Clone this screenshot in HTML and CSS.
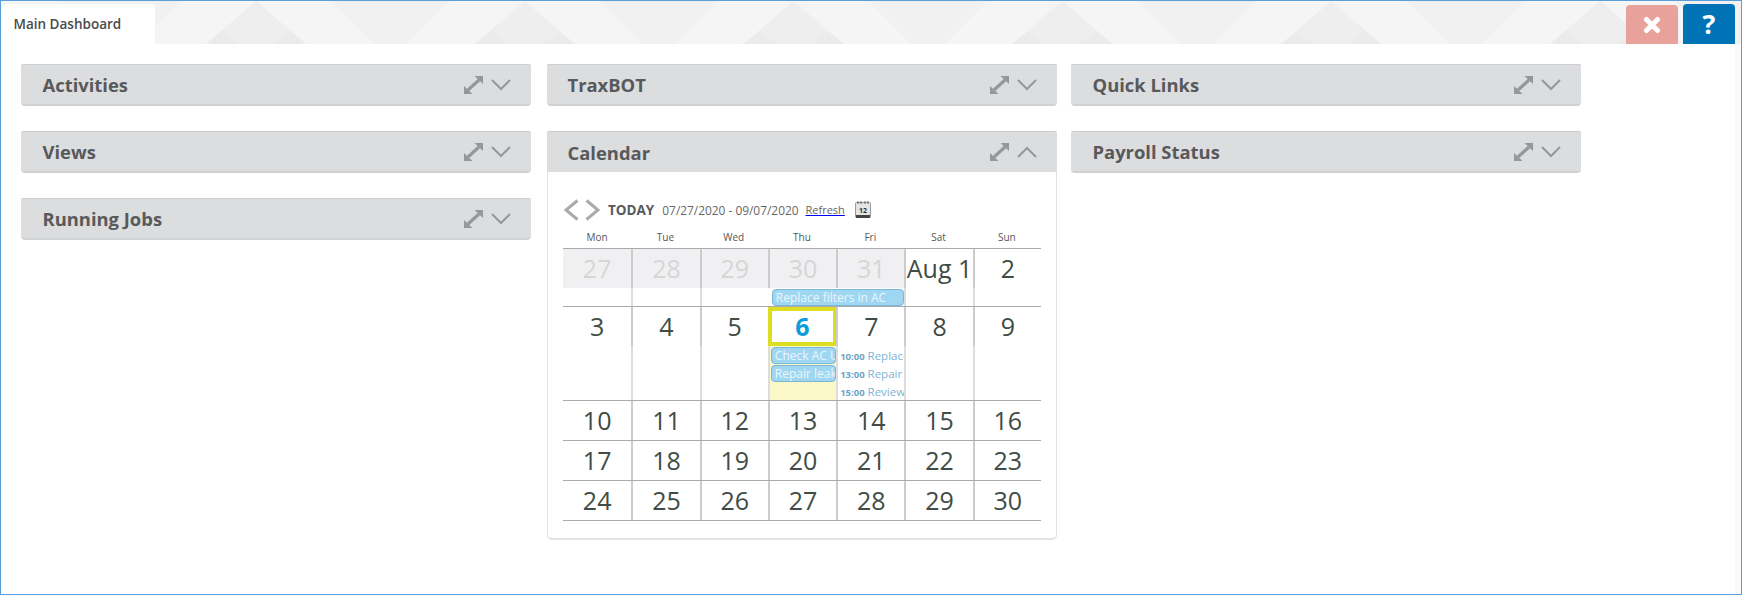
FILE: index.html
```html
<!DOCTYPE html>
<html lang="en">
<head>
    <meta charset="UTF-8">
    <meta name="viewport" content="width=device-width, initial-scale=1.0">
    <title>Main Dashboard</title>
    <link rel="stylesheet" href="styles.css">
</head>
<body>
    <svg width="0" height="0" class="defs">
        <symbol id="ico-expand" viewBox="0 0 19 18">
            <polygon points="10.5,0 19,0 19,8" />
            <polygon points="0,10 0,18 8.5,18" />
            <line x1="4" y1="14" x2="15" y2="4" stroke-width="3.2" />
        </symbol>
    </svg>

    <div class="app">
        <div class="tabbar">
            <svg class="tabbar-bg" width="100%" height="43">
                <defs>
                    <pattern id="tri" width="268.8" height="43" patternUnits="userSpaceOnUse" patternTransform="translate(121 0)">
                        <polygon points="59,0 209,0 252,43 16,43" fill="#f5f5f5" />
                        <polygon points="134,0 184,43 84,43" fill="#eeeeee" />
                        <polygon points="100,30 84,43 116,43" fill="#ebebeb" />
                        <polygon points="168,30 152,43 184,43" fill="#ebebeb" />
                    </pattern>
                </defs>
                <rect width="100%" height="43" fill="#f1f1f1" />
                <rect width="100%" height="43" fill="url(#tri)" />
            </svg>
            <div class="tab">Main Dashboard</div>
            <div class="tab-buttons">
                <button class="btn-close">
                    <svg width="18" height="18" viewBox="0 0 18 18"><path d="M3.5 3.5 14.5 14.5M14.5 3.5 3.5 14.5" /></svg>
                </button>
                <button class="btn-help">?</button>
            </div>
        </div>

        <div class="columns">
            <div class="column">
                <div class="panel">
                    <div class="panel-head">
                        <span class="panel-title">Activities</span>
                        <svg class="ico-expand"><use href="#ico-expand" /></svg>
                        <svg class="ico-chevron" viewBox="0 0 20 12"><path d="M1 1 10 10 19 1" /></svg>
                    </div>
                </div>
                <div class="panel">
                    <div class="panel-head">
                        <span class="panel-title">Views</span>
                        <svg class="ico-expand"><use href="#ico-expand" /></svg>
                        <svg class="ico-chevron" viewBox="0 0 20 12"><path d="M1 1 10 10 19 1" /></svg>
                    </div>
                </div>
                <div class="panel">
                    <div class="panel-head">
                        <span class="panel-title">Running Jobs</span>
                        <svg class="ico-expand"><use href="#ico-expand" /></svg>
                        <svg class="ico-chevron" viewBox="0 0 20 12"><path d="M1 1 10 10 19 1" /></svg>
                    </div>
                </div>
            </div>

            <div class="column column-mid">
                <div class="panel">
                    <div class="panel-head">
                        <span class="panel-title">TraxBOT</span>
                        <svg class="ico-expand"><use href="#ico-expand" /></svg>
                        <svg class="ico-chevron" viewBox="0 0 20 12"><path d="M1 1 10 10 19 1" /></svg>
                    </div>
                </div>
                <div class="panel panel-open">
                    <div class="panel-head">
                        <span class="panel-title">Calendar</span>
                        <svg class="ico-expand"><use href="#ico-expand" /></svg>
                        <svg class="ico-chevron" viewBox="0 0 20 12"><path d="M1 11 10 2 19 11" /></svg>
                    </div>
                    <div class="panel-body">
                        <div class="cal-nav">
                            <svg class="cal-arrow" viewBox="0 0 15 22"><path d="M13.5 1.5 2 11 13.5 20.5" /></svg>
                            <svg class="cal-arrow" viewBox="0 0 15 22"><path d="M1.5 1.5 13 11 1.5 20.5" /></svg>
                            <span class="cal-today">TODAY</span>
                            <span class="cal-range">07/27/2020 - 09/07/2020</span>
                            <a class="cal-refresh" href="#">Refresh</a>
                            <svg class="cal-icon" width="16" height="17" viewBox="0 0 16 17">
                                <rect x="0.5" y="1.5" width="15" height="15" rx="1" fill="#e4e4e4" stroke="#999" />
                                <rect x="1" y="14" width="14" height="3" fill="#444" />
                                <path d="M3 0v3M6 0v3M10 0v3M13 0v3" stroke="#666" />
                                <text x="8" y="11.5" class="cal-icon-text">12</text>
                            </svg>
                        </div>
                        <div class="cal-heads">
                            <span>Mon</span><span>Tue</span><span>Wed</span><span>Thu</span><span>Fri</span><span>Sat</span><span>Sun</span>
                        </div>
                        <div class="cal-grid">
                            <div class="week week-first">
                                <div class="day day-out">27</div>
                                <div class="day day-out">28</div>
                                <div class="day day-out">29</div>
                                <div class="day day-out">30</div>
                                <div class="day day-out">31</div>
                                <div class="day">Aug 1</div>
                                <div class="day">2</div>
                                <div class="slot"></div><div class="slot"></div><div class="slot"></div>
                                <div class="slot slot-span">
                                    <div class="event">Replace filters in AC</div>
                                </div>
                                <div class="slot"></div><div class="slot"></div>
                            </div>
                            <div class="week week-tall">
                                <div class="day">3</div>
                                <div class="day">4</div>
                                <div class="day">5</div>
                                <div class="day day-today"><span>6</span></div>
                                <div class="day">7</div>
                                <div class="day">8</div>
                                <div class="day">9</div>
                                <div class="slot"></div><div class="slot"></div><div class="slot"></div>
                                <div class="slot slot-today">
                                    <div class="event">Check AC Unit</div>
                                    <div class="event">Repair leak</div>
                                </div>
                                <div class="slot slot-agenda">
                                    <div class="agenda"><b>10:00</b> Replace filters</div>
                                    <div class="agenda"><b>13:00</b> Repair leak</div>
                                    <div class="agenda"><b>15:00</b> Review AC</div>
                                </div>
                                <div class="slot"></div><div class="slot"></div>
                            </div>
                            <div class="week">
                                <div class="day">10</div><div class="day">11</div><div class="day">12</div><div class="day">13</div><div class="day">14</div><div class="day">15</div><div class="day">16</div>
                            </div>
                            <div class="week">
                                <div class="day">17</div><div class="day">18</div><div class="day">19</div><div class="day">20</div><div class="day">21</div><div class="day">22</div><div class="day">23</div>
                            </div>
                            <div class="week">
                                <div class="day">24</div><div class="day">25</div><div class="day">26</div><div class="day">27</div><div class="day">28</div><div class="day">29</div><div class="day">30</div>
                            </div>
                        </div>
                    </div>
                </div>
            </div>

            <div class="column column-right">
                <div class="panel">
                    <div class="panel-head">
                        <span class="panel-title">Quick Links</span>
                        <svg class="ico-expand"><use href="#ico-expand" /></svg>
                        <svg class="ico-chevron" viewBox="0 0 20 12"><path d="M1 1 10 10 19 1" /></svg>
                    </div>
                </div>
                <div class="panel">
                    <div class="panel-head">
                        <span class="panel-title">Payroll Status</span>
                        <svg class="ico-expand"><use href="#ico-expand" /></svg>
                        <svg class="ico-chevron" viewBox="0 0 20 12"><path d="M1 1 10 10 19 1" /></svg>
                    </div>
                </div>
            </div>
        </div>
    </div>
</body>
</html>
```

FILE: styles.css
```css
* {
    box-sizing: border-box;
}

body {
    margin: 0;
    font-family: "Open Sans", "Noto Sans", sans-serif;
    background-color: #fff;
    color: #58595b;
}

.defs {
    position: absolute;
}

.app {
    height: 595px;
    border: 1px solid #5a9fdc;
    overflow: hidden;
}

/* top strip */
.tabbar {
    position: relative;
    display: flex;
    justify-content: space-between;
    align-items: flex-end;
    height: 43px;
}

.tabbar-bg {
    position: absolute;
    top: 0;
    left: 0;
}

.tab {
    position: relative;
    width: 154px;
    height: 40px;
    padding: 11px 0 0 12.5px;
    background-color: #fff;
    border-top-left-radius: 6px;
    border-top-right-radius: 4px;
    font-size: 13.5px;
    font-weight: 600;
    line-height: 18px;
    color: #4a4a4c;
}

.tab-buttons {
    position: relative;
    display: flex;
    align-items: flex-end;
    gap: 5px;
    margin-right: 6px;
}

.tab-buttons button {
    display: flex;
    justify-content: center;
    align-items: center;
    width: 52px;
    padding: 0;
    border: none;
    border-radius: 4px 4px 0 0;
    color: #fff;
}

.btn-close {
    height: 39px;
    background-color: #e9a19b;
}

.btn-close path {
    fill: none;
    stroke: #fff;
    stroke-width: 5;
    stroke-linecap: round;
}

.btn-help {
    height: 40px;
    background-color: #0073b6;
    font-family: "Open Sans", sans-serif;
    font-size: 27px;
    font-weight: 700;
    line-height: 40px;
}

/* panels */
.columns {
    display: flex;
    align-items: flex-start;
    height: 551px;
    padding: 20px 0 0 20px;
    border-right: 6px solid #fafafa;
}

.column {
    display: flex;
    flex-direction: column;
    flex: none;
    gap: 25px;
    width: 510px;
}

.column-mid {
    margin-left: 16px;
}

.column-right {
    margin-left: 14px;
}

.panel {
    border-radius: 0 0 4px 4px;
}

.panel-head {
    display: flex;
    align-items: center;
    height: 42px;
    padding: 0 20px 0 21.5px;
    background-color: #dcdddf;
    border-top: 1px solid #cdcdcf;
    border-bottom: 2px solid #d0d1d3;
    border-radius: 2px 2px 4px 4px;
}

.column-mid .panel-head {
    padding-left: 20.5px;
}

.panel-title {
    flex: 1;
    font-size: 18.4px;
    font-weight: 700;
}

.ico-expand {
    width: 19px;
    height: 18px;
    margin-right: 8px;
    fill: #969798;
    stroke: #969798;
    stroke-width: 0;
}

.ico-chevron {
    width: 20px;
    height: 12px;
    fill: none;
    stroke: #969798;
    stroke-width: 2;
}

.panel-open .panel-head {
    height: 41px;
    border-bottom: none;
    border-radius: 2px 2px 0 0;
}

.panel-body {
    height: 368px;
    padding: 0 15px;
    border: 1px solid #e2e2e2;
    border-top: none;
    border-bottom-width: 2px;
    border-radius: 0 0 5px 5px;
}

/* calendar */
.cal-nav {
    display: flex;
    align-items: center;
    height: 51px;
    padding: 24px 0 0 1px;
}

.cal-arrow {
    width: 15px;
    height: 22px;
    margin-right: 6px;
    fill: none;
    stroke: #aaa;
    stroke-width: 3;
}

.cal-today {
    margin-left: 2px;
    font-size: 13.5px;
    font-weight: 700;
}

.cal-range {
    margin-left: 8px;
    font-size: 11.9px;
    color: #666;
}

.cal-refresh {
    margin-left: 7px;
    font-size: 11px;
    color: #666;
    text-decoration: underline #00f;
}

.cal-icon {
    margin-left: 10px;
}

.cal-icon-text {
    font-size: 7px;
    font-weight: 700;
    text-anchor: middle;
    fill: #333;
}

.cal-heads {
    display: grid;
    grid-template-columns: repeat(7, 1fr);
    height: 25px;
    font-size: 10px;
    line-height: 28px;
    text-align: center;
    color: #555;
}

.cal-grid {
    border-top: 1px solid #aaa;
}

.week {
    display: grid;
    grid-template-columns: repeat(7, 1fr);
    grid-auto-rows: 39px;
    border-bottom: 1px solid #aaa;
}

.week-first {
    grid-template-rows: 39px 18px;
}

.week-tall {
    grid-template-rows: 39px 54px;
}

.day {
    font-size: 25px;
    line-height: 39px;
    text-align: center;
    color: #404c44;
    border-left: 2px solid #ccc;
}

.day:first-child,
.slot:nth-child(8) {
    border-left: none;
}

.day-out {
    background-color: #f0f0f2;
    color: #d6d6d6;
}

.day-today {
    border: 4px solid #dddd22;
    border-right-width: 3px;
    line-height: 31px;
    font-weight: 700;
    color: #0d9ddb;
}

.slot {
    overflow: hidden;
    border-left: 2px solid #ddd;
}

.slot-span {
    grid-column: span 2;
    padding: 1px 0 0 2px;
    border-left-color: #fff;
}

.slot-today {
    padding: 1px 0 0 1px;
    background-color: #faf7c8;
}

.slot-agenda {
    padding: 1px 0 0 2px;
}

.event {
    height: 17px;
    margin-bottom: 1px;
    padding-left: 3px;
    overflow: hidden;
    white-space: nowrap;
    background-color: #9fd6f1;
    border: 1px solid #7ab8d6;
    border-radius: 4px;
    font-size: 12px;
    line-height: 15px;
    color: #eaf6fc;
}

.agenda {
    height: 18px;
    white-space: nowrap;
    font-size: 11.5px;
    line-height: 18px;
    color: #7db3d3;
}

.agenda b {
    font-size: 9.5px;
    color: #6aa5c8;
}
```
